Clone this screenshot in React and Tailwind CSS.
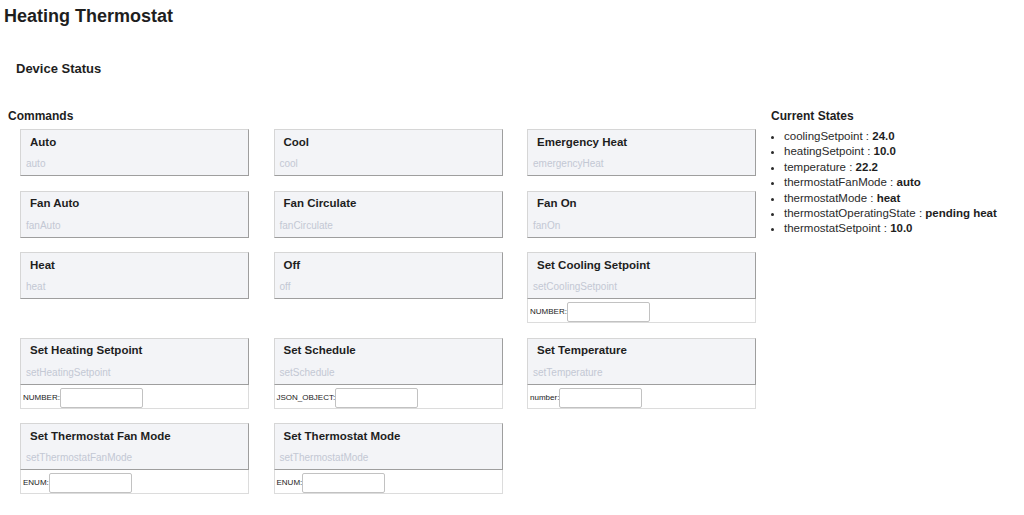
const COMMANDS = [
  { title: 'Auto', name: 'auto' },
  { title: 'Cool', name: 'cool' },
  { title: 'Emergency Heat', name: 'emergencyHeat' },
  { title: 'Fan Auto', name: 'fanAuto' },
  { title: 'Fan Circulate', name: 'fanCirculate' },
  { title: 'Fan On', name: 'fanOn' },
  { title: 'Heat', name: 'heat' },
  { title: 'Off', name: 'off' },
  { title: 'Set Cooling Setpoint', name: 'setCoolingSetpoint', arg: 'NUMBER' },
  { title: 'Set Heating Setpoint', name: 'setHeatingSetpoint', arg: 'NUMBER' },
  { title: 'Set Schedule', name: 'setSchedule', arg: 'JSON_OBJECT' },
  { title: 'Set Temperature', name: 'setTemperature', arg: 'number' },
  { title: 'Set Thermostat Fan Mode', name: 'setThermostatFanMode', arg: 'ENUM' },
  { title: 'Set Thermostat Mode', name: 'setThermostatMode', arg: 'ENUM' },
]

const STATES = [
  ['coolingSetpoint', '24.0'],
  ['heatingSetpoint', '10.0'],
  ['temperature', '22.2'],
  ['thermostatFanMode', 'auto'],
  ['thermostatMode', 'heat'],
  ['thermostatOperatingState', 'pending heat'],
  ['thermostatSetpoint', '10.0'],
]

function CommandCard({ cmd }) {
  return (
    <div className="w-[229px]">
      <div className="h-[47px] bg-[#f3f4f7] border border-t-[#d6d6d6] border-l-[#d6d6d6] border-r-[#9e9e9e] border-b-[#9e9e9e] pt-[4.5px] cursor-pointer">
        <div className="pl-[9px] text-[11.5px] leading-[14px] font-bold text-[#1e1e1e]">{cmd.title}</div>
        <div className="pl-[5px] mt-[9.5px] text-[10px] leading-[12px] text-[#c3c8d4]">{cmd.name}</div>
      </div>
      {cmd.arg && (
        <div className="h-[24px] bg-white border-x border-b border-[#dcdcdc] flex items-start pt-[3px] pl-[2px]">
          <span className="text-[8px] leading-[20px] text-[#222]">{cmd.arg}:</span>
          <input className="w-[83px] h-[20px] border border-[#c2c2c2] rounded-[2px] bg-white outline-none" />
        </div>
      )}
    </div>
  )
}

export default function App() {
  return (
    <div className="w-[1024px] min-h-[515px] bg-white text-[#1e1e1e]" style={{ fontFamily: '"Liberation Sans", Arial, sans-serif' }}>
      <h1 className="pl-1 pt-[6px] text-[18px] leading-[20px] font-bold">Heating Thermostat</h1>
      <h2 className="pl-4 mt-[35px] text-[13px] leading-[15px] font-bold">Device Status</h2>

      <div className="flex mt-[33px]">
        {/* Commands */}
        <div className="w-[771px] flex-shrink-0">
          <h3 className="pl-2 text-[12px] leading-[14px] font-bold">Commands</h3>
          <div className="ml-[20px] mt-[6px] grid grid-cols-[repeat(3,229px)] gap-x-[24.5px] gap-y-[14.5px] items-start">
            {COMMANDS.map(c => <CommandCard key={c.name} cmd={c} />)}
          </div>
        </div>

        {/* Current States */}
        <div className="flex-1">
          <h3 className="text-[12px] leading-[14px] font-bold">Current States</h3>
          <ul className="mt-[6px] list-disc pl-[13px] text-[11.5px] leading-[15.4px] text-[#2a2a2a]">
            {STATES.map(([k, v]) => (
              <li key={k}>
                {k} : <span className="font-bold text-[#1e1e1e]">{v}</span>
              </li>
            ))}
          </ul>
        </div>
      </div>
    </div>
  )
}
